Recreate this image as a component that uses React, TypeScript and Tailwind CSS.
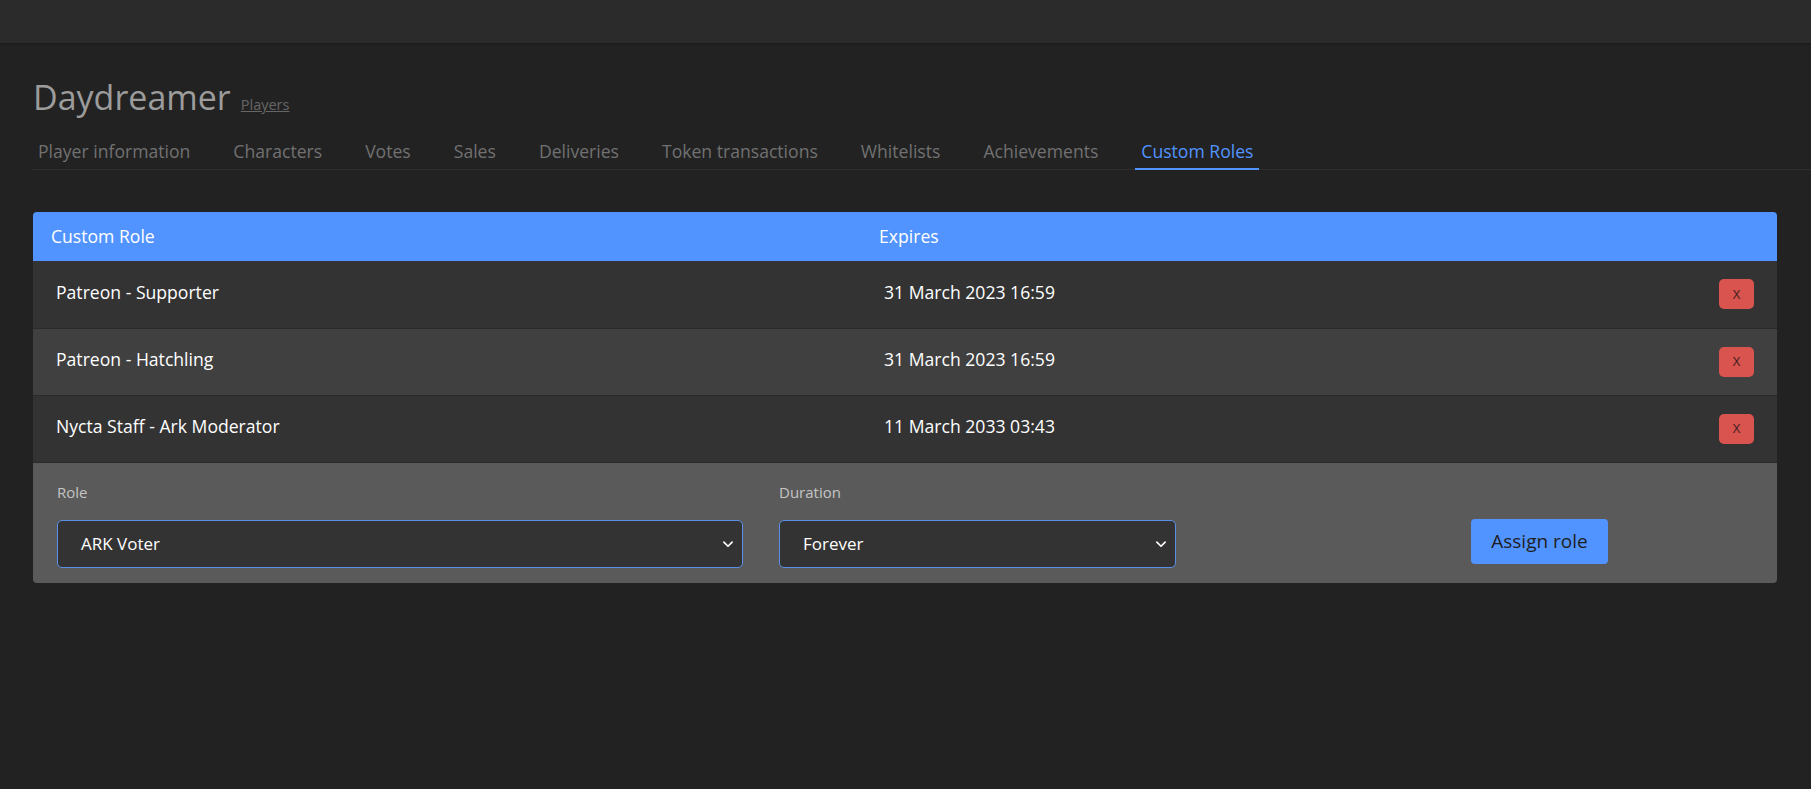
import React from "react";

const tabs = [
  "Player information",
  "Characters",
  "Votes",
  "Sales",
  "Deliveries",
  "Token transactions",
  "Whitelists",
  "Achievements",
  "Custom Roles",
];

const roles = [
  { name: "Patreon - Supporter", expires: "31 March 2023 16:59" },
  { name: "Patreon - Hatchling", expires: "31 March 2023 16:59" },
  { name: "Nycta Staff - Ark Moderator", expires: "11 March 2033 03:43" },
];

const Chevron = () => (
  <svg width="12" height="12" viewBox="0 0 16 16" fill="none">
    <path
      d="M2.5 5.5L8 11l5.5-5.5"
      stroke="#ffffff"
      strokeWidth="2.2"
      strokeLinecap="round"
      strokeLinejoin="round"
    />
  </svg>
);

const FakeSelect = ({ value, width }: { value: string; width: string }) => (
  <div
    className={`${width} h-[48px] flex items-center justify-between pl-[23px] pr-[8px] bg-[#333333] border border-[#5b8fe6] rounded-[5px] text-[17px] text-white`}
  >
    <span>{value}</span>
    <Chevron />
  </div>
);

const App = () => {
  const active = "Custom Roles";

  return (
    <div
      className="min-h-[789px] bg-[#222222] text-white"
      style={{ fontFamily: '"Open Sans", "Noto Sans", sans-serif' }}
    >
      <div className="h-[43px] bg-[#2b2b2b] shadow-[0_1px_2px_rgba(0,0,0,0.25)]" />

      <div className="pl-[32px]">
        <div className="flex items-baseline mt-[34px]">
          <h1 className="ml-[1px] text-[34px] leading-[1.2] text-[#9c9c9c]">
            Daydreamer
          </h1>
          <a className="ml-[10px] text-[14.5px] text-[#666666] underline">
            Players
          </a>
        </div>

        <nav className="flex gap-[31px] mt-[12px] border-b border-[#2e2e2e]">
          {tabs.map((t) => (
            <div
              key={t}
              className={`px-[6px] pt-[8px] pb-[4px] -mb-px border-b-2 text-[17.6px] leading-[1.5] ${
                t === active
                  ? "border-[#5294ff] text-[#5294ff]"
                  : "border-transparent text-[#717171]"
              }`}
            >
              {t}
            </div>
          ))}
        </nav>

        <div className="mt-[42px] mr-[34px] ml-[1px] rounded-[4px] overflow-hidden">
          <div className="grid grid-cols-[828px_1fr] h-[49px] items-center bg-[#5294ff] text-[17.6px]">
            <div className="pl-[18px]">Custom Role</div>
            <div className="pl-[18px]">Expires</div>
          </div>

          {roles.map((r, i) => (
            <div
              key={r.name}
              className={`grid grid-cols-[828px_1fr_auto] h-[67.4px] items-center border-b border-[#2a2a2a] text-[17.6px] font-medium ${
                i % 2 === 1 ? "bg-[#404040]" : "bg-[#333333]"
              }`}
            >
              <div className="pl-[23px] pb-[5px]">{r.name}</div>
              <div className="pl-[23px] pb-[5px]">{r.expires}</div>
              <div className="pr-[23px]">
                <button className="w-[35px] h-[30px] rounded-[5px] bg-[#d9534f] text-[13px] text-[#3a2020] flex items-center justify-center">
                  X
                </button>
              </div>
            </div>
          ))}

          <div className="bg-[#5a5a5a] pl-[24px] pt-[18px] pb-[15px] flex items-end">
            <div className="flex flex-col gap-[16px]">
              <label className="text-[15px] leading-[1.5] text-[#c4c4c4]">
                Role
              </label>
              <FakeSelect value="ARK Voter" width="w-[686px]" />
            </div>
            <div className="flex flex-col gap-[16px] ml-[36px]">
              <label className="text-[15px] leading-[1.5] text-[#c4c4c4]">
                Duration
              </label>
              <FakeSelect value="Forever" width="w-[397px]" />
            </div>
            <button className="ml-[295px] mb-[4px] w-[137px] h-[45px] rounded-[4px] bg-[#5294ff] text-[19px] text-[#1e1e1e]">
              Assign role
            </button>
          </div>
        </div>
      </div>
    </div>
  );
};

export default App;
